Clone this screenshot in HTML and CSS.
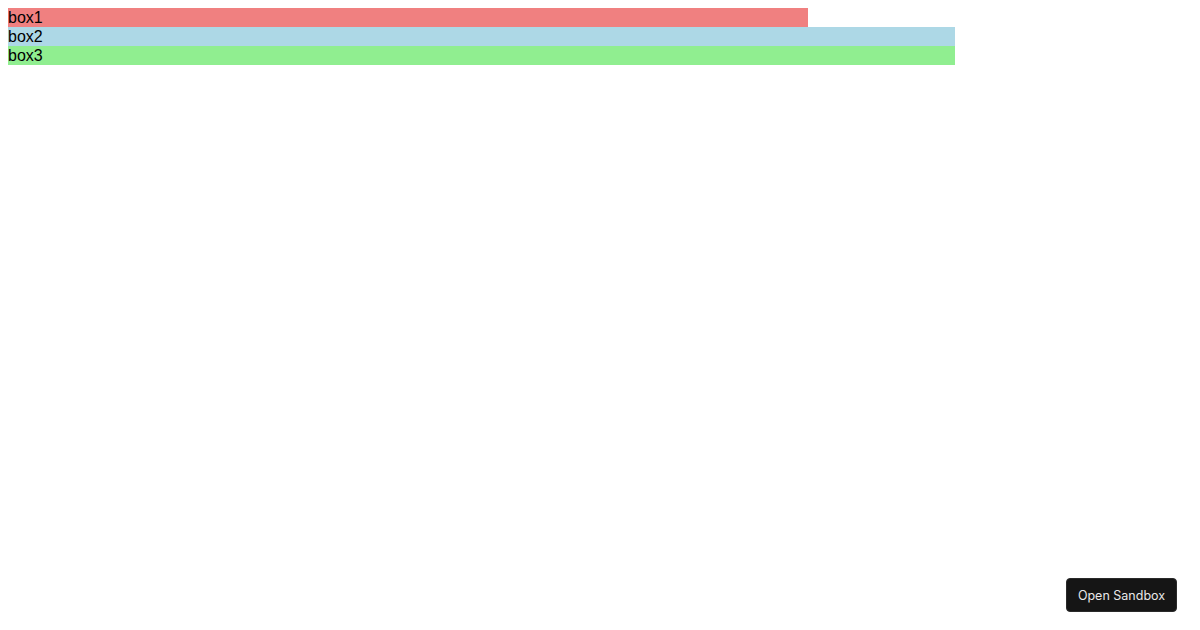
FILE: index.html
```html
<!DOCTYPE html>
<html>
<head>
<meta charset="utf-8">
<link rel="stylesheet" href="styles.css">
</head>
<body>
<div class="box box1">box1</div>
<div class="box box2">box2</div>
<div class="box box3">box3</div>
<a class="sandbox-btn" href="#">Open Sandbox</a>
</body>
</html>
```
FILE: styles.css
```css
body {
  margin: 8px;
  font-family: "Liberation Sans", Arial, sans-serif;
  font-size: 16px;
  line-height: 19px;
  color: #000;
  background: #fff;
}
.box1 { width: 800px; background: lightcoral; }
.box2 { width: 80%; background: lightblue; }
.box3 { width: 80%; background: lightgreen; }
.sandbox-btn {
  position: fixed;
  right: 23px;
  bottom: 18px;
  height: 34px;
  width: 111px;
  box-sizing: border-box;
  display: flex;
  align-items: center;
  justify-content: center;
  background: #151515;
  color: #e8e8e8;
  border-radius: 4px;
  border: 1px solid #2a2a2a;
  font-family: Inter, "Liberation Sans", Arial, sans-serif;
  font-size: 12.5px;
  text-decoration: none;
}
```
